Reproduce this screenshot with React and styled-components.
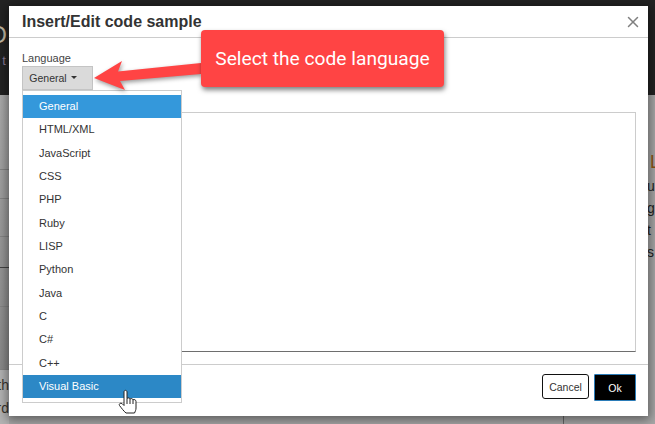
import React from 'react';
import styled, { createGlobalStyle } from 'styled-components';
import { X } from 'lucide-react';

const GlobalStyle = createGlobalStyle`
  html, body { margin: 0; padding: 0; background: #a8a8a8; }
  body { font-family: "Liberation Sans", Arial, sans-serif; }
`;

const languages = ['General', 'HTML/XML', 'JavaScript', 'CSS', 'PHP', 'Ruby', 'LISP', 'Python', 'Java', 'C', 'C#', 'C++', 'Visual Basic'];

const Page = styled.div`
  position: relative;
  width: 655px;
  height: 424px;
  overflow: hidden;
  display: flex;
  flex-direction: column;
  background: #a8a8a8;
`;

const TopBar = styled.div`
  height: 95px;
  flex: none;
  background: #232323;
  display: flex;
  flex-direction: column;
  align-items: flex-start;
`;

const Logo = styled.span`
  margin-top: 21px;
  width: 7px;
  font-size: 24px;
  line-height: 27px;
  color: #c4b8a2;
  display: flex;
  justify-content: flex-end;
`;

const Tagline = styled.span`
  margin-top: 6px;
  width: 8px;
  font-size: 13px;
  line-height: 14px;
  color: #8a7a96;
  text-align: center;
`;

const Content = styled.div`
  flex: 1;
  display: flex;
  justify-content: space-between;
`;

const LeftColumn = styled.div`
  width: 9px;
  flex: none;
  display: flex;
  flex-direction: column;
  background: linear-gradient(#ababab, #8a8a8a 275px, #b4b4b4 275px);
`;

const TableRow = styled.div`
  height: ${(p) => p.$h}px;
  box-sizing: border-box;
  border-bottom: 1px solid ${(p) => p.$line || '#858585'};
`;

const Snippets = styled.div`
  padding-top: 4px;
  display: flex;
  flex-direction: column;
`;

const Snippet = styled.div`
  height: 23px;
  font-size: 14px;
  line-height: 23px;
  color: #3a342c;
  white-space: nowrap;
  direction: rtl;
  overflow: hidden;
`;

const MiddleColumn = styled.div`
  flex: 1;
  padding-right: 84px;
  display: flex;
  justify-content: flex-end;
  align-items: flex-end;
`;

const ColumnRule = styled.div`
  width: 1px;
  height: 40px;
  background: #666;
`;

const RightColumn = styled.div`
  width: 7px;
  flex: none;
  padding: 56px 0 0 2px;
  box-sizing: border-box;
  overflow: hidden;
  font-size: 14px;
  color: #222;
  display: flex;
  flex-direction: column;
  gap: 4px;
`;

const Heading = styled.span`
  font-size: 18px;
  line-height: 22px;
  color: #8f5514;
`;

const Line = styled.span`
  line-height: 18px;
  margin-left: -3px;
`;

const Overlay = styled.div`
  position: absolute;
  inset: 0;
  padding: 6px 7px 8px 9px;
  box-sizing: border-box;
  display: flex;
`;

const Dialog = styled.div`
  flex: 1;
  display: flex;
  flex-direction: column;
  background: #fff;
  box-shadow: 0 2px 10px 2px rgba(0, 0, 0, 0.45);
`;

const Header = styled.header`
  height: 31px;
  flex: none;
  border-bottom: 1px solid #ccc;
  padding: 0 6px 0 13px;
  display: flex;
  align-items: center;
  justify-content: space-between;
`;

const Title = styled.h1`
  margin: 0;
  font-size: 16px;
  font-weight: 700;
  color: #333;
`;

const Close = styled.span`
  display: flex;
  color: #808080;
  margin-top: 1px;
`;

const Body = styled.div`
  position: relative;
  flex: 1;
  padding: 13px 12px 12px 13px;
  display: flex;
  flex-direction: column;
`;

const Label = styled.label`
  font-size: 11px;
  line-height: 15px;
  color: #444;
`;

const Select = styled.button`
  width: 71px;
  height: 24px;
  flex: none;
  padding: 0 9px 0 0;
  border: 1px solid #c4c4c4;
  background: #dadada;
  font: 10.5px "Liberation Sans", Arial, sans-serif;
  color: #333;
  display: flex;
  align-items: center;
  justify-content: center;
  gap: 4px;
`;

const Caret = styled.i`
  width: 0;
  height: 0;
  margin-top: -2px;
  border-left: 3.5px solid transparent;
  border-right: 3.5px solid transparent;
  border-top: 3.5px solid #333;
`;

const Editor = styled.div`
  flex: 1;
  margin-top: 22px;
  border: 1px solid #ccc;
  border-bottom-color: #6e6e6e;
`;

const Menu = styled.ul`
  position: absolute;
  left: 13px;
  top: 52px;
  width: 160px;
  box-sizing: border-box;
  margin: 0;
  padding: 4px 0 4px;
  list-style: none;
  background: #fff;
  border: 1px solid #ccc;
`;

const MenuItem = styled.li`
  height: 23.35px;
  line-height: 23px;
  padding-left: 16px;
  font-size: 11px;
  color: ${(p) => (p.$tone ? '#fff' : '#333')};
  background: ${(p) => (p.$tone === 'selected' ? '#3498db' : p.$tone === 'hover' ? '#2c88c6' : 'transparent')};
`;

const Footer = styled.footer`
  height: 52px;
  flex: none;
  box-sizing: border-box;
  border-top: 1px solid #ccc;
  padding: 9px 12px 0 0;
  display: flex;
  justify-content: flex-end;
  align-items: flex-start;
  gap: 5px;
`;

const Button = styled.button`
  height: ${(p) => (p.$primary ? 27 : 25)}px;
  width: ${(p) => (p.$primary ? 42 : 47)}px;
  padding: 0;
  font: 10.5px "Liberation Sans", Arial, sans-serif;
  border-radius: ${(p) => (p.$primary ? 1 : 3)}px;
  border: 1px solid ${(p) => (p.$primary ? '#2b7cb8' : '#111')};
  background: ${(p) => (p.$primary ? '#000' : '#fff')};
  color: ${(p) => (p.$primary ? '#fff' : '#333')};
`;

const Callout = styled.div`
  position: absolute;
  left: 201px;
  top: 30px;
  width: 243px;
  height: 57px;
  border-radius: 4px;
  background: #ff4444;
  color: #fff;
  font-family: Roboto, "Liberation Sans", sans-serif;
  font-size: 19.2px;
  display: flex;
  align-items: center;
  justify-content: center;
  box-shadow: 1px 3px 5px rgba(0, 0, 0, 0.5);
`;

const Arrow = styled.svg`
  position: absolute;
  left: 90px;
  top: 56px;
  filter: drop-shadow(1px 2px 2px rgba(0, 0, 0, 0.4));
`;

const Pointer = styled.svg`
  position: absolute;
  left: 118px;
  top: 389px;
`;

export default function App() {
  return (
    <Page>
      <GlobalStyle />
      <TopBar>
        <Logo>O</Logo>
        <Tagline>t</Tagline>
      </TopBar>
      <Content>
        <LeftColumn>
          <TableRow $h={75} />
          <TableRow $h={29} />
          <TableRow $h={38} />
          <TableRow $h={31} $line="#444" />
          <TableRow $h={39} />
          <TableRow $h={63} />
          <Snippets>
            <Snippet>th</Snippet>
            <Snippet>rd</Snippet>
          </Snippets>
        </LeftColumn>
        <MiddleColumn>
          <ColumnRule />
        </MiddleColumn>
        <RightColumn>
          <Heading>L</Heading>
          <Line>u</Line>
          <Line>g</Line>
          <Line>t</Line>
          <Line>s</Line>
        </RightColumn>
      </Content>
      <Overlay>
        <Dialog>
          <Header>
            <Title>Insert/Edit code sample</Title>
            <Close><X size={18} strokeWidth={2} /></Close>
          </Header>
          <Body>
            <Label>Language</Label>
            <Select>General <Caret /></Select>
            <Editor />
            <Menu>
              {languages.map((name) => (
                <MenuItem key={name} $tone={name === 'General' ? 'selected' : name === 'Visual Basic' ? 'hover' : undefined}>
                  {name}
                </MenuItem>
              ))}
            </Menu>
          </Body>
          <Footer>
            <Button>Cancel</Button>
            <Button $primary>Ok</Button>
          </Footer>
        </Dialog>
      </Overlay>
      <Arrow width="115" height="40" viewBox="0 0 115 40">
        <path d="M4 22 L32 5 L28 15.500 L111 7 L111 18 L30 25 L35 34 Z" fill="#ff4444" />
      </Arrow>
      <Callout>Select the code language</Callout>
      <Pointer width="21" height="25" viewBox="0 0 21 25">
        <path
          d="M6 3 C6 0.800 9 0.800 9 3 L9 9.500 C10 8.500 11.800 8.800 12 10 C13 9.200 14.800 9.500 15 10.800 C16 10.200 18 10.600 18 12.500 L18 19 C18 21 17.200 22.500 16.500 24 L8 24 C5.500 22 3.500 19 1.500 16.500 C0.500 15 2.500 13.500 4 14.500 L6 16.500 Z"
          fill="#fff"
          stroke="#222"
          strokeWidth="1"
          strokeLinejoin="round"
        />
        <path d="M9 9.500 L9 15 M12 10 L12 15 M15 10.800 L15 15" stroke="#222" strokeWidth="1" fill="none" />
      </Pointer>
    </Page>
  );
}
